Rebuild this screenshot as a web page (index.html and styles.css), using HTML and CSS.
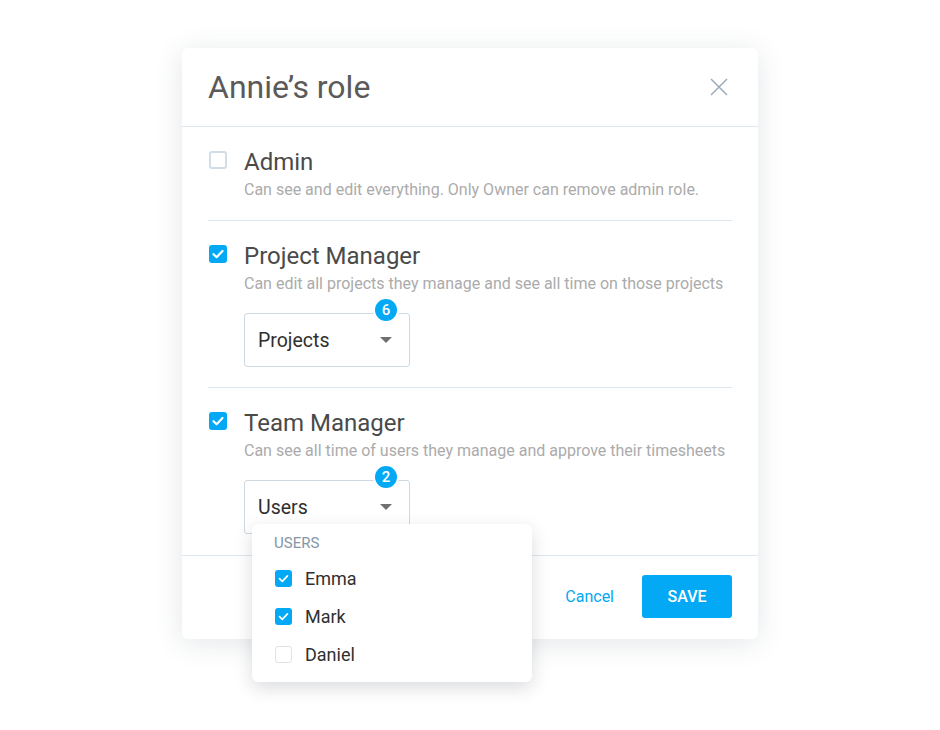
FILE: index.html
```html
<!DOCTYPE html>
<html lang="en">
<head>
  <meta charset="UTF-8"/>
  <meta name="viewport" content="width=device-width, initial-scale=1.0"/>
  <title>Annie's role</title>
  <link rel="stylesheet" href="styles.css">
</head>
<body>
<div class="page">
  <div class="modal">
    <header class="modal-header">
      <h1>Annie’s role</h1>
      <button class="close" aria-label="Close">
        <svg width="18" height="18" viewBox="0 0 18 18"><path d="M1 1L17 17M17 1L1 17" stroke="#9aabb9" stroke-width="1.5" fill="none"/></svg>
      </button>
    </header>

    <div class="modal-body">
      <!-- Admin -->
      <div class="role">
        <span class="check"></span>
        <div class="role-info">
          <div class="role-name">Admin</div>
          <div class="role-desc">Can see and edit everything. Only Owner can remove admin role.</div>
        </div>
      </div>

      <!-- Project Manager -->
      <div class="role">
        <span class="check on">
          <svg viewBox="0 0 18 18"><path d="M4.5 9.2L7.6 12.2L13.5 6" stroke="#fff" stroke-width="2.2" fill="none" stroke-linecap="round" stroke-linejoin="round"/></svg>
        </span>
        <div class="role-info">
          <div class="role-name">Project Manager</div>
          <div class="role-desc">Can edit all projects they manage and see all time on those projects</div>
          <div class="select">
            <span>Projects</span>
            <span class="caret"></span>
            <span class="badge">6</span>
          </div>
        </div>
      </div>

      <!-- Team Manager -->
      <div class="role last">
        <span class="check on">
          <svg viewBox="0 0 18 18"><path d="M4.5 9.2L7.6 12.2L13.5 6" stroke="#fff" stroke-width="2.2" fill="none" stroke-linecap="round" stroke-linejoin="round"/></svg>
        </span>
        <div class="role-info">
          <div class="role-name">Team Manager</div>
          <div class="role-desc">Can see all time of users they manage and approve their timesheets</div>
          <div class="select">
            <span>Users</span>
            <span class="caret"></span>
            <span class="badge">2</span>

            <div class="dropdown">
              <div class="dropdown-title">Users</div>
              <label class="option">
                <span class="check small on">
                  <svg viewBox="0 0 18 18"><path d="M4.8 9.2L7.7 12L13.2 6.3" stroke="#fff" stroke-width="1.8" fill="none" stroke-linecap="round" stroke-linejoin="round"/></svg>
                </span>
                Emma
              </label>
              <label class="option">
                <span class="check small on">
                  <svg viewBox="0 0 18 18"><path d="M4.8 9.2L7.7 12L13.2 6.3" stroke="#fff" stroke-width="1.8" fill="none" stroke-linecap="round" stroke-linejoin="round"/></svg>
                </span>
                Mark
              </label>
              <label class="option">
                <span class="check small light"></span>
                Daniel
              </label>
            </div>
          </div>
        </div>
      </div>
    </div>

    <footer class="modal-footer">
      <button class="cancel">Cancel</button>
      <button class="save">SAVE</button>
    </footer>
  </div>
</div>
</body>
</html>
```

FILE: styles.css
```css
body {
  font-family: Roboto, 'Noto Sans', sans-serif;
  margin: 0;
  background: #fff;
  color: #333;
}

.page {
  min-height: 730px;
  box-sizing: border-box;
  padding: 48px 0 0 182px;
}

.modal {
  width: 576px;
  background: #fff;
  border-radius: 6px;
  box-shadow: 0 4px 28px rgba(40, 60, 80, 0.13);
}

.modal-header {
  height: 78px;
  padding: 0 26px;
  border-bottom: 1px solid #dfe7ee;
  display: flex;
  justify-content: space-between;
  align-items: center;
}

.modal-header h1 {
  margin: 0;
  font-size: 32px;
  font-weight: 400;
  color: #5a5a5a;
}

.close {
  background: none;
  border: none;
  padding: 0;
  margin-right: 4px;
  width: 18px;
  height: 18px;
  cursor: pointer;
}

.modal-body {
  padding: 0 26px;
}

.role {
  display: flex;
  padding: 20px 0;
  border-bottom: 1px solid #dfe7ee;
}

.role.last {
  border-bottom: none;
  padding-bottom: 21px;
}

.check {
  flex: none;
  box-sizing: border-box;
  width: 18px;
  height: 18px;
  margin: 4px 17px 0 1px;
  border: 2px solid #d3dde6;
  border-radius: 3px;
  background: #fff;
}

.check svg {
  display: block;
  width: 18px;
  height: 18px;
}

.check.on {
  border: none;
  background: #03a9f4;
}

.role-info {
  flex: 1;
}

.role-name {
  font-size: 24px;
  line-height: 30px;
  color: #4a4a4a;
  margin-bottom: 3px;
}

.role-desc {
  font-size: 16px;
  line-height: 20px;
  color: #ababab;
}

.select {
  position: relative;
  box-sizing: border-box;
  width: 166px;
  height: 54px;
  margin-top: 19px;
  padding: 0 17px 0 13px;
  border: 1px solid #cfd9e2;
  border-radius: 3px;
  display: flex;
  justify-content: space-between;
  align-items: center;
  font-size: 19.5px;
  color: #2f2f2f;
}

.caret {
  width: 0;
  height: 0;
  border-left: 6px solid transparent;
  border-right: 6px solid transparent;
  border-top: 6px solid #707070;
}

.badge {
  position: absolute;
  top: -17px;
  right: 10px;
  box-sizing: border-box;
  width: 26px;
  height: 26px;
  border-radius: 50%;
  border: 2px solid #fff;
  background: #03a9f4;
  color: #fff;
  font-size: 15px;
  font-weight: 500;
  display: flex;
  align-items: center;
  justify-content: center;
}

.dropdown {
  position: absolute;
  z-index: 10;
  top: 43px;
  left: 7px;
  width: 280px;
  box-sizing: border-box;
  padding: 10px 0 9px 22px;
  background: #fff;
  border-radius: 6px;
  box-shadow: 0 6px 18px rgba(30, 40, 50, 0.16);
}

.dropdown-title {
  font-size: 15px;
  line-height: 18px;
  text-transform: uppercase;
  color: #8596a6;
  margin-bottom: 7px;
}

.option {
  display: flex;
  align-items: center;
  height: 38px;
  font-size: 18px;
  color: #2f2f2f;
}

.check.small {
  width: 17px;
  height: 17px;
  margin: 0 13px 0 1px;
}

.check.small svg {
  width: 17px;
  height: 17px;
}

.check.light {
  border: 1px solid #dde4ea;
}

.modal-footer {
  height: 84px;
  box-sizing: border-box;
  padding: 0 26px 2px;
  border-top: 1px solid #dfe7ee;
  display: flex;
  justify-content: flex-end;
  align-items: center;
  gap: 28px;
}

.cancel {
  background: none;
  border: none;
  padding: 0;
  font-family: inherit;
  font-size: 16px;
  color: #03a9f4;
  cursor: pointer;
}

.save {
  width: 90px;
  height: 43px;
  border: none;
  border-radius: 3px;
  background: #03a9f4;
  color: #fff;
  font-family: inherit;
  font-size: 16px;
  font-weight: 500;
  cursor: pointer;
}
```
